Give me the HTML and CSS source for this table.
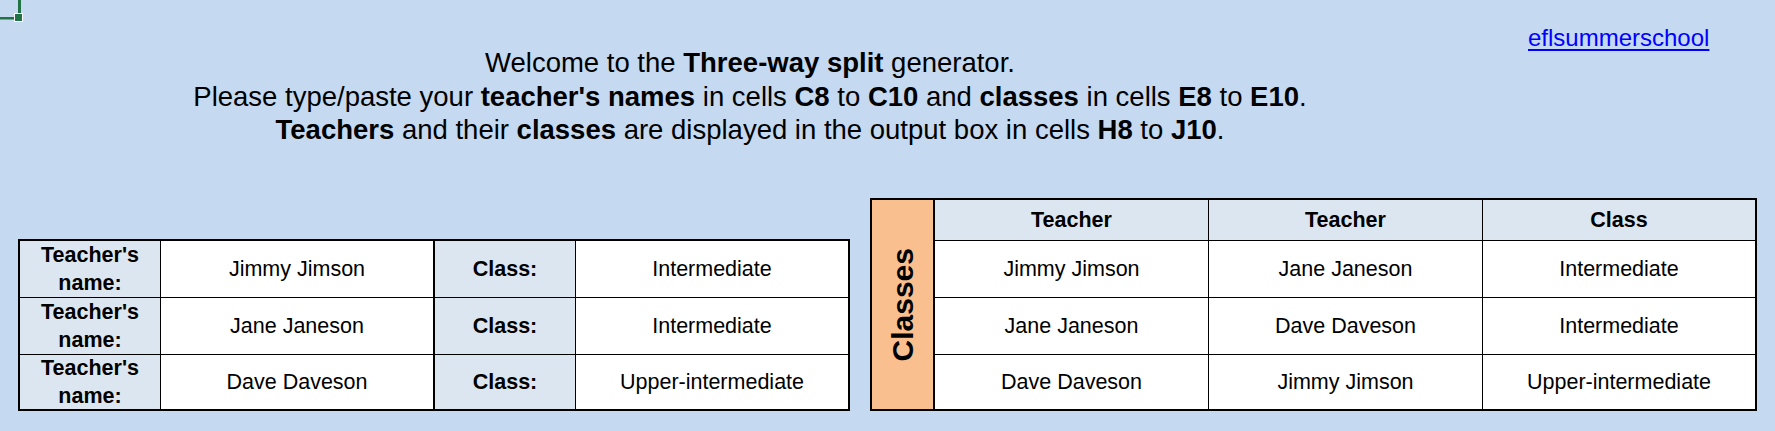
FILE: index.html
```html
<!DOCTYPE html>
<html lang="en">
<head>
<meta charset="utf-8">
<title>Three-way split generator</title>
<link rel="stylesheet" href="styles.css">
</head>
<body>
<div class="sheet">
  <svg class="cell-cursor" width="26" height="26" viewBox="0 0 26 26" aria-hidden="true">
    <rect x="18" y="0" width="3" height="14" fill="#217346"/>
    <rect x="0" y="17" width="15" height="2.5" fill="#217346"/>
    <rect x="14" y="13" width="9" height="9" fill="#ffffff"/>
    <rect x="15" y="14" width="7" height="7" fill="#217346"/>
  </svg>
  <header class="top">
    <div class="intro">
      <div class="intro-line">Welcome to the <b>Three-way split</b> generator.</div>
      <div class="intro-line">Please type/paste your <b>teacher's names</b> in cells <b>C8</b> to <b>C10</b> and <b>classes</b> in cells <b>E8</b> to <b>E10</b>.</div>
      <div class="intro-line"><b>Teachers</b> and their <b>classes</b> are displayed in the output box in cells <b>H8</b> to <b>J10</b>.</div>
    </div>
    <div class="link-wrap"><a class="site-link" href="#">eflsummerschool</a></div>
  </header>
  <main class="tables">
    <div class="input-grid">
      <div class="cell label">Teacher's<br>name:</div>
      <div class="cell value">Jimmy Jimson</div>
      <div class="cell label split">Class:</div>
      <div class="cell value">Intermediate</div>
      <div class="cell label">Teacher's<br>name:</div>
      <div class="cell value">Jane Janeson</div>
      <div class="cell label split">Class:</div>
      <div class="cell value">Intermediate</div>
      <div class="cell label">Teacher's<br>name:</div>
      <div class="cell value">Dave Daveson</div>
      <div class="cell label split">Class:</div>
      <div class="cell value">Upper-intermediate</div>
    </div>
    <div class="output-grid">
      <div class="cell side"><span class="side-text">Classes</span></div>
      <div class="cell head">Teacher</div>
      <div class="cell head">Teacher</div>
      <div class="cell head">Class</div>
      <div class="cell value">Jimmy Jimson</div>
      <div class="cell value">Jane Janeson</div>
      <div class="cell value">Intermediate</div>
      <div class="cell value">Jane Janeson</div>
      <div class="cell value">Dave Daveson</div>
      <div class="cell value">Intermediate</div>
      <div class="cell value">Dave Daveson</div>
      <div class="cell value">Jimmy Jimson</div>
      <div class="cell value">Upper-intermediate</div>
    </div>
  </main>
</div>
</body>
</html>
```
FILE: styles.css
```css
html, body {
  margin: 0;
  padding: 0;
}
body {
  background: #c5d9f1;
  font-family: "Liberation Sans", Arial, sans-serif;
  color: #000;
  width: 1775px;
  height: 431px;
  overflow: hidden;
}
.sheet {
  position: relative;
  width: 1775px;
  height: 431px;
}
.cell-cursor {
  position: absolute;
  left: 0;
  top: 0;
}
.top {
  display: grid;
  grid-template-columns: 1500px 1fr;
  height: 198px;
}
.intro {
  padding-top: 46px;
  text-align: center;
  font-size: 27.5px;
  line-height: 33.7px;
}
.intro b {
  font-weight: bold;
}
.link-wrap {
  padding-top: 24px;
  padding-left: 28px;
  font-size: 24px;
}
.site-link {
  color: #0000ff;
  text-decoration: underline;
  text-decoration-thickness: 2px;
  text-underline-offset: 3px;
}
.tables {
  display: flex;
  align-items: flex-end;
  gap: 20px;
  padding-left: 18px;
}
.input-grid,
.output-grid {
  display: grid;
  gap: 1px;
  background: #000;
  border: 2px solid #000;
}
.input-grid {
  grid-template-columns: 140px 272px 141px 272px;
  grid-template-rows: 56px 56px 54px;
}
.output-grid {
  grid-template-columns: 62px 273px 273px 272px;
  grid-template-rows: 40px 56px 56px 54px;
}
.cell {
  box-sizing: border-box;
  display: flex;
  align-items: center;
  justify-content: center;
  text-align: center;
  font-size: 21.5px;
  background: #ffffff;
  overflow: hidden;
}
.label {
  background: #dce6f1;
  font-weight: bold;
  line-height: 28.3px;
}
.split {
  border-left: 1px solid #000;
}
.head {
  background: #dce6f1;
  font-weight: bold;
}
.side {
  grid-row: 1 / span 4;
  background: #fabf8f;
  border-right: 1px solid #000;
}
.side-text {
  writing-mode: vertical-rl;
  transform: rotate(180deg);
  font-weight: bold;
  font-size: 30px;
}
```
